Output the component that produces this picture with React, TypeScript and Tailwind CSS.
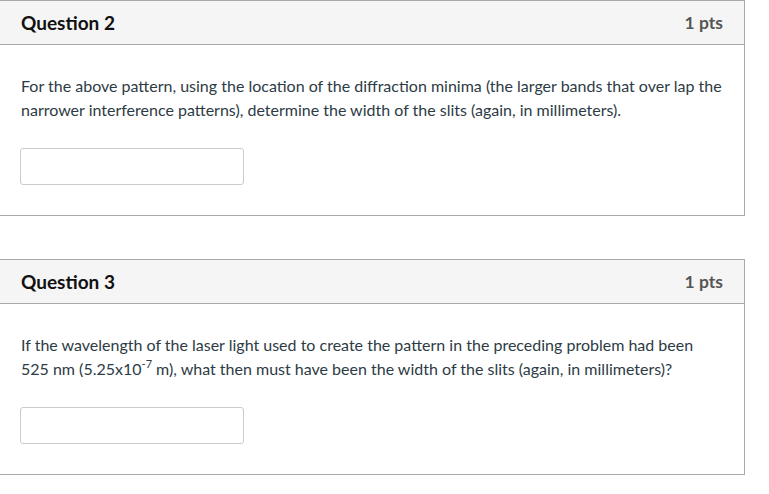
import React from "react";

function Question({ title, children }: { title: string; children: React.ReactNode }) {
  return (
    <div className="w-[745px] border-y border-r border-[#a9a9a9] bg-white">
      <div className="flex h-[44px] items-center justify-between border-b border-[#a9a9a9] bg-[#f5f5f5] pl-[21px] pr-[21px]">
        <h2 className="text-[19px] font-bold text-[#111] leading-none">{title}</h2>
        <div className="text-[17.5px] font-bold text-[#555] leading-none">1 pts</div>
      </div>
      <div className="px-[21px] pt-[29px] pb-[30px]">
        <p className="text-[16px] leading-[24px] text-[#2d3b45]">{children}</p>
        <div className="-ml-px mt-[26px] h-[37px] w-[224px] rounded-[3px] border border-[#c7cdd1] bg-white" />
      </div>
    </div>
  );
}

export default function App() {
  return (
    <div className="min-h-[494px] bg-white" style={{ fontFamily: "Lato, 'Liberation Sans', sans-serif" }}>
      <Question title="Question 2">
        For the above pattern, using the location of the diffraction minima (the larger bands that over lap the
        <br />
        narrower interference patterns), determine the width of the slits (again, in millimeters).
      </Question>
      <div className="h-[43px]" />
      <Question title="Question 3">
        If the wavelength of the laser light used to create the pattern in the preceding problem had been
        <br />
        525 nm (5.25x10<sup className="relative -top-[7px] align-baseline text-[11px] leading-none">-7</sup> m), what then must have been the width of the slits (again, in
        millimeters)?
      </Question>
    </div>
  );
}
